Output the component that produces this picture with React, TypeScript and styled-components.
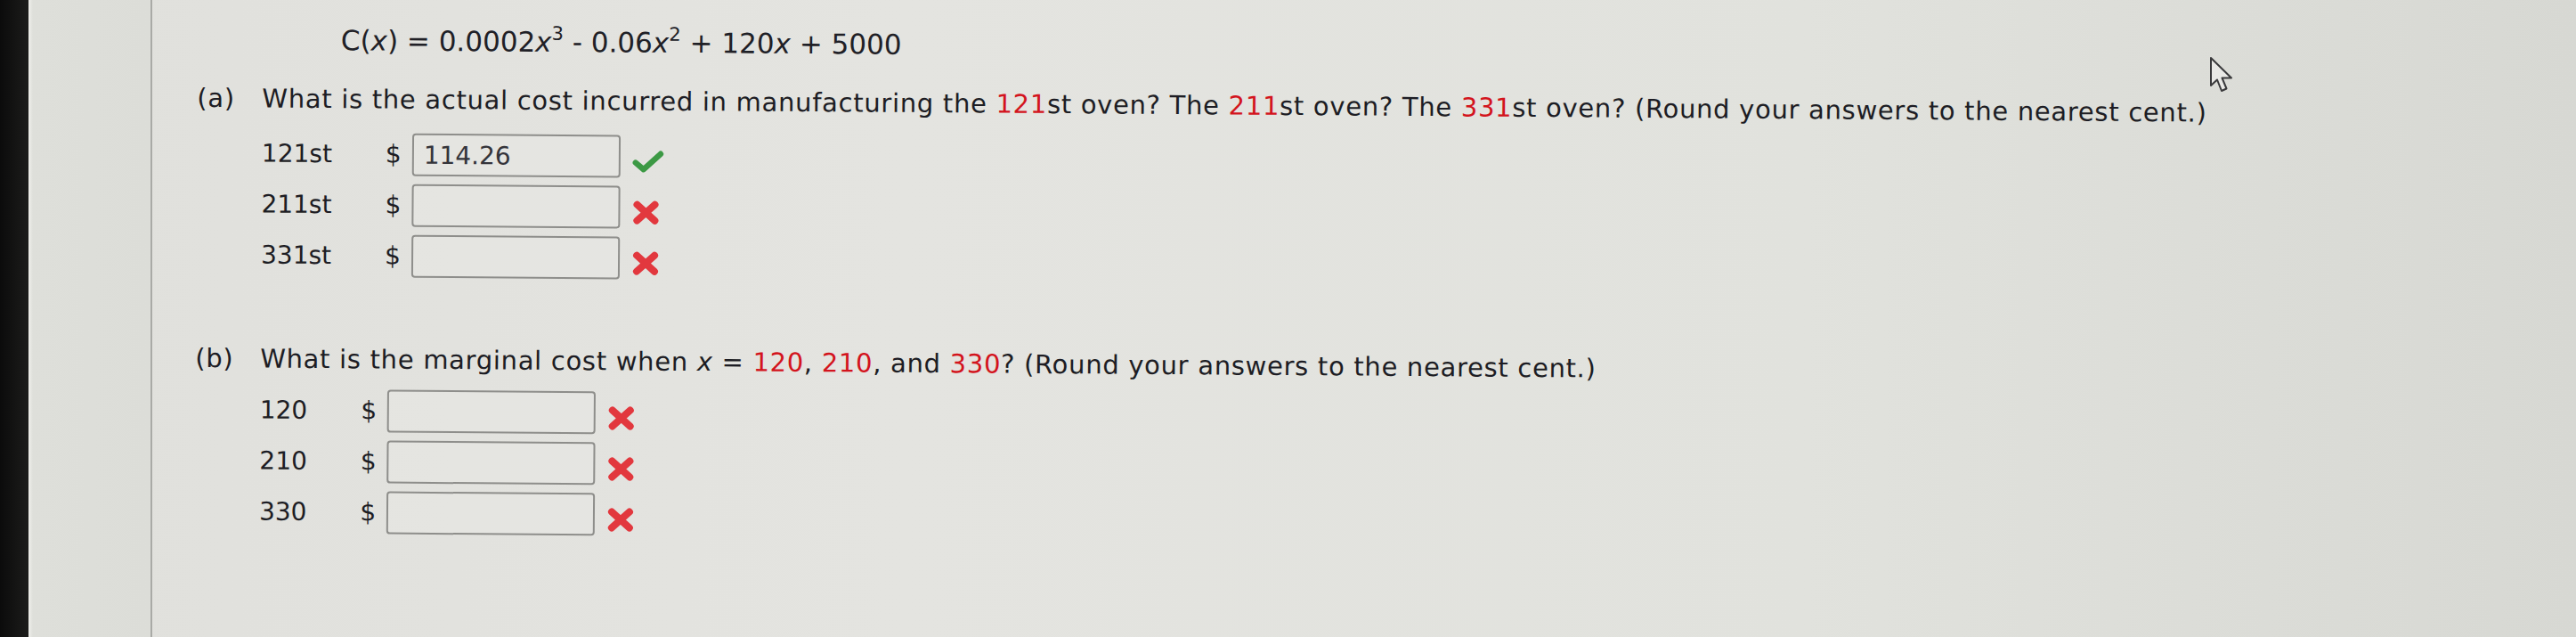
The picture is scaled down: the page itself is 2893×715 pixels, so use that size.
import React from 'react';
import styled, { createGlobalStyle } from 'styled-components';

const GlobalStyle = createGlobalStyle`
  html, body {
    margin: 0;
    padding: 0;
  }
  body {
    background: #dcdcd7;
    overflow: hidden;
    font-family: 'DejaVu Sans', Verdana, sans-serif;
  }
`;

const Screen = styled.div`
  position: relative;
  display: flex;
  width: 2893px;
  height: 715px;
  overflow: hidden;
  background: linear-gradient(
    90deg,
    #e0e0dc 0%,
    #e4e4e0 35%,
    #e1e2dd 70%,
    #d7d8d3 100%
  );
`;

const Bezel = styled.div`
  flex-shrink: 0;
  width: 32px;
  background: linear-gradient(90deg, #0b0b0b, #1c1c1b);
`;

const Sidebar = styled.div`
  flex-shrink: 0;
  width: 137px;
  background: linear-gradient(90deg, #efefeb 0, #dedfda 5px, #dcddd8 100%);
  border-right: 2px solid #a9aaa6;
`;

const Main = styled.main`
  flex: 1;
  padding-left: 51px;
`;

// the photo is taken a little askew, so the whole sheet tilts slightly
const Sheet = styled.div`
  transform: rotate(0.42deg);
  transform-origin: 0 0;
  color: #1d1d24;
`;

const Formula = styled.div`
  margin: 24px 0 0 161px;
  font-size: 31px;
  line-height: 40px;
  color: #202026;
  white-space: nowrap;

  sup {
    font-size: 0.68em;
    line-height: 0;
    vertical-align: 0.62em;
  }
`;

const Var = styled.i`
  font-style: italic;
`;

const Part = styled.section<{ $top: number }>`
  margin-top: ${(p) => p.$top}px;
`;

const Question = styled.div`
  display: grid;
  grid-template-columns: 73px max-content;
  font-size: 29px;
  letter-spacing: 0.7px;
  line-height: 36px;
  white-space: nowrap;
`;

const Hi = styled.span`
  color: #d3141d;
`;

const Answers = styled.div<{ $top: number }>`
  display: grid;
  grid-template-columns: max-content max-content max-content max-content;
  row-gap: 9px;
  align-items: center;
  margin: ${(p) => p.$top}px 0 0 73px;
  font-size: 28px;
  line-height: 36px;
`;

const RowLabel = styled.span`
  padding-right: 60px;
`;

const Dollar = styled.span`
  padding-right: 12px;
`;

const AnswerBox = styled.input`
  box-sizing: border-box;
  width: 234px;
  height: 48px;
  margin: 0;
  padding: 0 0 0 11px;
  border: 2px solid #8e8e8b;
  border-radius: 4px;
  background: rgba(255, 255, 255, 0.1);
  font-family: 'DejaVu Sans', Verdana, sans-serif;
  font-size: 28px;
  color: #34343a;
  outline: none;
`;

const Mark = styled.span`
  display: flex;
  margin: 12px 0 0 13px;
`;

const Cursor = styled.svg`
  position: absolute;
  left: 2481px;
  top: 63px;
`;

const CheckIcon = () => (
  <svg width="36" height="26" viewBox="0 0 36 26">
    <path
      d="M4 14 L13 21.5 L32 4"
      fill="none"
      stroke="#3c9944"
      strokeWidth="6.5"
      strokeLinecap="round"
      strokeLinejoin="round"
    />
  </svg>
);

const CrossIcon = () => (
  <svg width="32" height="28" viewBox="0 0 32 28">
    <path
      d="M6 5 L26 23 M26 5 L6 23"
      fill="none"
      stroke="#e2383e"
      strokeWidth="8"
      strokeLinecap="round"
    />
  </svg>
);

type Row = { label: React.ReactNode; value?: string; correct: boolean };

const partA: Row[] = [
  { label: '121st', value: '114.26', correct: true },
  { label: '211st', correct: false },
  { label: '331st', correct: false },
];

const partB: Row[] = [
  { label: '120', correct: false },
  { label: '210', correct: false },
  { label: '330', correct: false },
];

const AnswerRows = ({ rows, top }: { rows: Row[]; top: number }) => (
  <Answers $top={top}>
    {rows.map((r, i) => (
      <React.Fragment key={i}>
        <RowLabel>{r.label}</RowLabel>
        <Dollar>$</Dollar>
        <AnswerBox readOnly value={r.value ?? ''} />
        <Mark>{r.correct ? <CheckIcon /> : <CrossIcon />}</Mark>
      </React.Fragment>
    ))}
  </Answers>
);

export default function App() {
  return (
    <>
      <GlobalStyle />
      <Screen>
        <Bezel />
        <Sidebar />
        <Main>
          <Sheet>
            <Formula>
              C(<Var>x</Var>) = 0.0002<Var>x</Var>
              <sup>3</sup> - 0.06<Var>x</Var>
              <sup>2</sup> + 120<Var>x</Var> + 5000
            </Formula>

            <Part $top={28}>
              <Question>
                <span>(a)</span>
                <span>
                  What is the actual cost incurred in manufacturing the{' '}
                  <Hi>121</Hi>st oven? The <Hi>211</Hi>st oven? The <Hi>331</Hi>
                  st oven? (Round your answers to the nearest cent.)
                </span>
              </Question>
              <AnswerRows rows={partA} top={20} />
            </Part>

            <Part $top={74}>
              <Question>
                <span>(b)</span>
                <span>
                  What is the marginal cost when <Var>x</Var> = <Hi>120</Hi>,{' '}
                  <Hi>210</Hi>, and <Hi>330</Hi>? (Round your answers to the
                  nearest cent.)
                </span>
              </Question>
              <AnswerRows rows={partB} top={16} />
            </Part>
          </Sheet>
        </Main>

        <Cursor width="30" height="44" viewBox="0 0 30 44">
          <path
            d="M2 2 L2 33 L9 26.5 L14 39 L19.5 36.5 L14.5 24.5 L25 24.5 Z"
            fill="#e9e9e6"
            stroke="#3a3a3c"
            strokeWidth="2"
            strokeLinejoin="round"
          />
        </Cursor>
      </Screen>
    </>
  );
}
